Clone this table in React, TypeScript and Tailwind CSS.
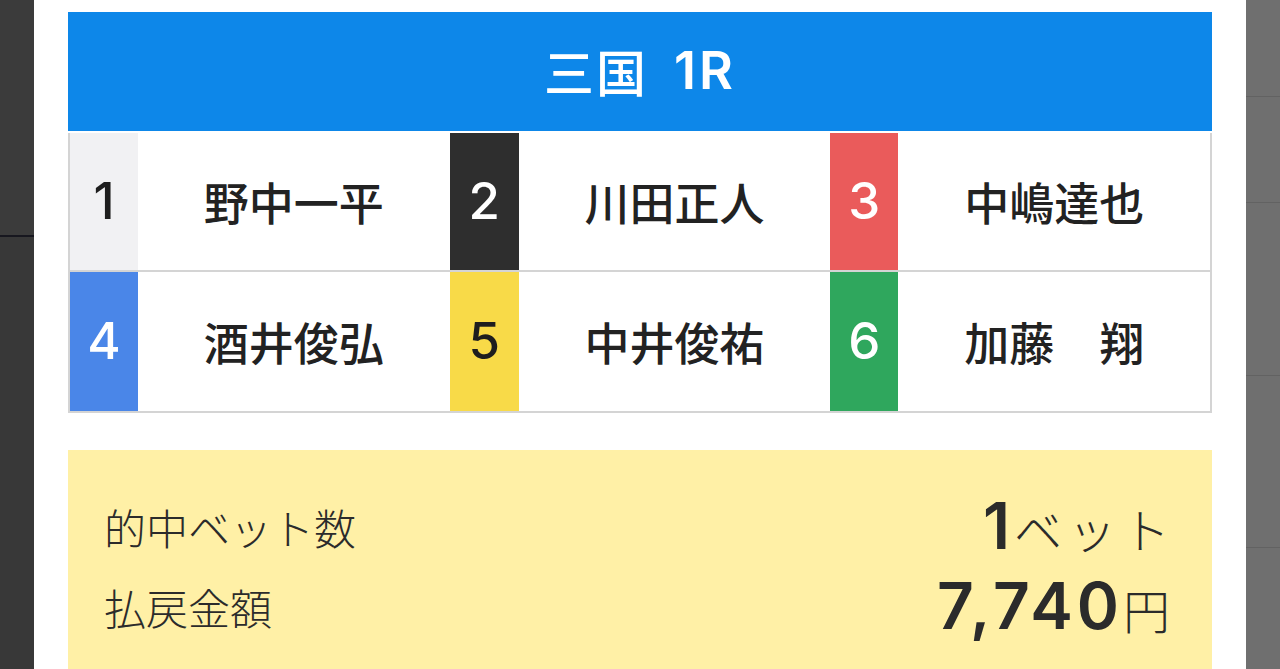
const racers = [
  { no: "1", name: "野中一平", cell: "bg-[#f1f1f3] text-[#1e1e1e]" },
  { no: "2", name: "川田正人", cell: "bg-[#2e2e2e] text-white" },
  { no: "3", name: "中嶋達也", cell: "bg-[#ea5b5b] text-white" },
  { no: "4", name: "酒井俊弘", cell: "bg-[#4a86e8] text-white" },
  { no: "5", name: "中井俊祐", cell: "bg-[#f8da48] text-[#1e1e1e]" },
  { no: "6", name: "加藤　翔", cell: "bg-[#2fa75d] text-white" },
];

const jp = "font-['Noto_Sans_CJK_JP','Noto_Sans',sans-serif]";
const num = "font-['Inter','Noto_Sans_CJK_JP',sans-serif]";

export default function App() {
  const rows = [racers.slice(0, 3), racers.slice(3, 6)];

  return (
    <div className={`flex h-[669px] w-[1280px] overflow-hidden ${jp}`}>
      {/* page behind the modal */}
      <div className="flex w-[34px] flex-col">
        <div className="h-[237px] border-b-2 border-[#17171f] bg-[#3b3b3b]" />
        <div className="flex-1 bg-[#383838]" />
      </div>

      <div className="flex flex-1 flex-col bg-white px-[34px] pt-[12px]">
        <div className="flex h-[119px] items-center justify-center bg-[#0d87e9] pb-[2px] text-[50px] font-medium tracking-[2px] text-white">
          三国<span className={`ml-[26px] ${num} text-[52px] font-semibold tracking-[3px]`}>1R</span>
        </div>

        <div className="mt-[2px] border-2 border-t-0 border-[#d4d4d4]">
          {rows.map((row, i) => (
            <div
              key={i}
              className={`grid h-[139px] grid-cols-[68px_1fr_69px_1fr_68px_1fr] ${
                i === 0 ? "border-b-2 border-[#d4d4d4]" : "h-[137px]"
              }`}
            >
              {row.map((r) => (
                <div key={r.no} className="contents">
                  <div
                    className={`flex items-center justify-center text-[51px] font-medium ${num} ${r.cell}`}
                  >
                    {r.no}
                  </div>
                  <div className="flex items-center justify-center text-[45px] font-medium text-[#222]">
                    {r.name}
                  </div>
                </div>
              ))}
            </div>
          ))}
        </div>

        <div className="mt-[37px] flex-1 bg-[#fff0a6] pl-[36px] pr-[42px] pt-[36px] text-[#2b2b2b]">
          <div className="flex h-[80px] items-center justify-between">
            <span className="text-[42px] font-light">的中ベット数</span>
            <span className="flex items-baseline">
              <span className={`${num} text-[64px] font-semibold`}>1</span>
              <span className="-mr-[6px] ml-[4px] text-[48px] font-light tracking-[6px]">ベット</span>
            </span>
          </div>
          <div className="flex h-[80px] items-center justify-between">
            <span className="text-[42px] font-light">払戻金額</span>
            <span className="flex items-baseline">
              <span className={`${num} text-[64px] font-semibold tracking-[4px]`}>
                7,740
              </span>
              <span className="text-[47px] font-light">円</span>
            </span>
          </div>
        </div>
      </div>

      <div className="flex w-[34px] flex-col bg-[#6f6f6f]">
        <div className="h-[97px] border-b border-[#626262]" />
        <div className="h-[106px] border-b border-[#626262]" />
        <div className="h-[173px] border-b border-[#626262]" />
        <div className="h-[172px] border-b border-[#626262]" />
        <div className="flex-1" />
      </div>
    </div>
  );
}
